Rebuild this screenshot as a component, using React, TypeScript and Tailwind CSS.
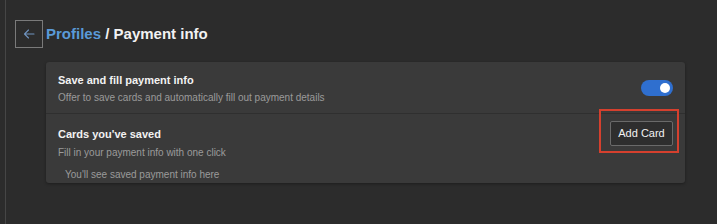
import React from "react";

function ToggleOn() {
  return (
    <div className="flex h-[16px] w-[32px] items-center justify-end rounded-full bg-[#2f6fcf] px-[3px]">
      <div className="h-[10px] w-[10px] rounded-full bg-white" />
    </div>
  );
}

export default function App() {
  return (
    <div
      className="flex h-[224px] w-full bg-[#2c2c2c] text-white"
      style={{ fontFamily: "'Liberation Sans', Arial, sans-serif" }}
    >
      <div className="w-[6px] shrink-0 border-r border-[#464646]" />
      <div className="flex flex-1 flex-col pl-[9px] pr-[32px] pt-[20px]">
        <div className="flex items-center gap-[3px]">
          <button className="flex h-[28px] w-[28px] items-center justify-center border border-[#7a7a7a] text-[#6f93bf]">
            <svg width="14" height="14" viewBox="0 0 14 14" fill="none">
              <path
                d="M12 7H2.5M6.5 3L2.5 7l4 4"
                stroke="currentColor"
                strokeWidth="1.1"
                strokeLinecap="round"
                strokeLinejoin="round"
              />
            </svg>
          </button>
          <h1 className="text-[15px] font-bold">
            <span className="text-[#5a9ad8]">Profiles</span>
            <span className="text-[#f2f2f2]"> / Payment info</span>
          </h1>
        </div>

        <div className="ml-[31px] mt-[14px] rounded-[3px] bg-[#3a3a3a] shadow-[0_1px_3px_rgba(0,0,0,0.35)]">
          <div className="flex h-[52px] items-center justify-between border-b border-[#2f2f2f] px-[12px]">
            <div className="flex flex-col gap-[4px] pt-[1px]">
              <div className="text-[11px] font-bold leading-[14px] text-[#f2f2f2]">
                Save and fill payment info
              </div>
              <div className="text-[10px] leading-[13px] text-[#9a9a9a]">
                Offer to save cards and automatically fill out payment details
              </div>
            </div>
            <ToggleOn />
          </div>

          <div className="flex h-[69px] justify-between px-[12px] pt-[13px]">
            <div className="flex flex-col">
              <div className="text-[11px] font-bold leading-[14px] text-[#f2f2f2]">
                Cards you've saved
              </div>
              <div className="mt-[5px] text-[10px] leading-[13px] text-[#9a9a9a]">
                Fill in your payment info with one click
              </div>
              <div className="ml-[7px] mt-[9px] text-[10px] leading-[13px] text-[#9a9a9a]">
                You'll see saved payment info here
              </div>
            </div>
            <div className="relative mt-[-7px] h-[25px]">
              <button className="h-[25px] w-[63px] rounded-[2px] border border-[#6a6a6a] bg-[#2e2e2e] text-[11px] text-[#f2f2f2]">
                Add Card
              </button>
              <div className="pointer-events-none absolute bottom-[-8px] left-[-11px] right-[-6px] top-[-11px] border-2 border-[#d5402e]" />
            </div>
          </div>
        </div>
      </div>
    </div>
  );
}
